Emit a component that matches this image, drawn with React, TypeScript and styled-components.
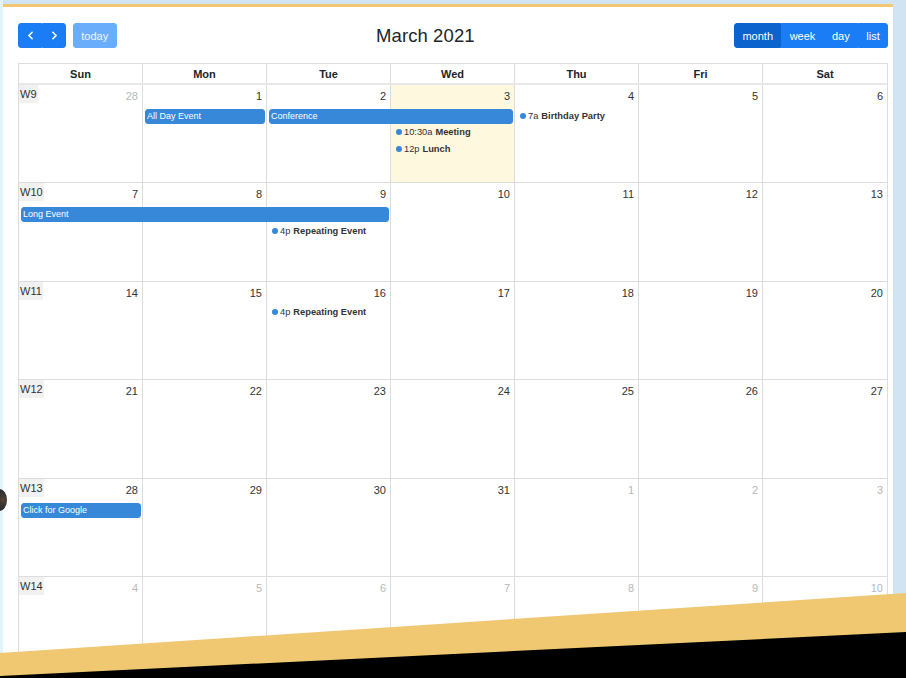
import React from "react";
import styled, { createGlobalStyle } from "styled-components";
import { ChevronLeft, ChevronRight } from "lucide-react";

const GlobalStyle = createGlobalStyle`
  html, body { margin: 0; padding: 0; }
  body {
    font-family: "Liberation Sans", Arial, Helvetica, sans-serif;
    width: 906px;
    height: 678px;
    overflow: hidden;
  }
  * { box-sizing: border-box; }
`;

const Frame = styled.div`
  position: relative;
  width: 906px;
  height: 678px;
  overflow: hidden;
  padding: 4px 13px 0 3px;
  background: linear-gradient(90deg, #e2f4fc 0, #e2f4fc 3px, #d0e4f3 3px);
  display: flex;
  flex-direction: column;
`;

const Panel = styled.div`
  flex: 1;
  min-height: 0;
  background: #fff;
  border-top: 3px solid #f2c772;
  padding: 16px 5px 0 15px;
  display: flex;
  flex-direction: column;
`;

const Toolbar = styled.div`
  display: flex;
  justify-content: space-between;
  align-items: center;
  height: 25px;
  margin-bottom: 15px;
`;

const Section = styled.div`
  display: flex;
  align-items: center;
  gap: 7px;
`;

const Group = styled.div`
  display: flex;
  & > button { border-radius: 0; }
  & > button:first-child { border-radius: 3px 0 0 3px; }
  & > button:last-child { border-radius: 0 3px 3px 0; }
`;

const Btn = styled.button<{ $active?: boolean; $faded?: boolean; $w?: number }>`
  height: 25px;
  padding: 0 7.3px;
  ${(p) => (p.$w ? `width: ${p.$w}px; padding: 0;` : "")}
  display: flex;
  align-items: center;
  justify-content: center;
  border: 1px solid ${(p) => (p.$active ? "#0b63cd" : p.$faded ? "#6aaefb" : "#1a7df6")};
  background: ${(p) => (p.$active ? "#0b63cd" : p.$faded ? "#6aaefb" : "#1a7df6")};
  color: ${(p) => (p.$faded ? "#eef6ff" : "#fff")};
  font-family: "Liberation Sans", Arial, sans-serif;
  font-size: 11px;
  border-radius: 3px;
  cursor: pointer;
`;

const Title = styled.h2`
  margin: 0;
  font-size: 18.5px;
  font-weight: 400;
  color: #212529;
  letter-spacing: 0.1px;
`;

const Calendar = styled.div`
  flex: 1;
  border: 1px solid #dddddd;
  border-bottom: none;
  display: flex;
  flex-direction: column;
`;

const HeaderRow = styled.div`
  display: grid;
  grid-template-columns: repeat(7, 1fr);
  height: 21px;
  border-bottom: 2px solid #e8e8e8;
`;

const HeaderCell = styled.div`
  display: flex;
  align-items: center;
  justify-content: center;
  font-size: 11px;
  font-weight: 700;
  color: #212529;
  border-right: 1px solid #dddddd;
  &:last-child { border-right: none; }
`;

const WeekRow = styled.div`
  display: grid;
  grid-template-columns: repeat(7, 1fr);
  grid-template-rows: 22px 17px 16.5px 16.5px 1fr;
  height: 98.4px;
  flex-shrink: 0;
`;

const DayCell = styled.div<{ $col: number; $today?: boolean }>`
  grid-column: ${(p) => p.$col};
  grid-row: 1 / -1;
  background: ${(p) => (p.$today ? "#fdf8de" : "#fff")};
  border-right: 1px solid #dddddd;
  border-bottom: 1px solid #dddddd;
  &:nth-child(7) { border-right: none; }
  display: flex;
  justify-content: space-between;
  align-items: flex-start;
`;

const WeekNum = styled.span`
  background: rgba(208, 208, 208, 0.3);
  color: #333;
  font-size: 11px;
  line-height: 14px;
  padding: 2px 1px 2px 1px;
`;

const DayNum = styled.span<{ $other?: boolean }>`
  margin-left: auto;
  padding: 4px 4px 0 0;
  font-size: 11px;
  line-height: 14px;
  color: ${(p) => (p.$other ? "#b8b8b8" : "#333")};
`;

const BlockEvent = styled.div<{ $col: number; $span: number; $row: number }>`
  grid-column: ${(p) => p.$col} / span ${(p) => p.$span};
  grid-row: ${(p) => p.$row};
  position: relative;
  margin: 2px 2px 0 2px;
  height: 15px;
  border: 1px solid #3788d8;
  border-radius: 3px;
  background: #3788d8;
  color: #fff;
  font-size: 9px;
  line-height: 13px;
  padding: 0 1px;
  white-space: nowrap;
  overflow: hidden;
`;

const DotEvent = styled.div<{ $col: number; $row: number }>`
  grid-column: ${(p) => p.$col};
  grid-row: ${(p) => p.$row};
  position: relative;
  display: flex;
  align-items: center;
  margin: 0 2px;
  padding-left: 3px;
  font-size: 9.3px;
  color: #333;
  white-space: nowrap;
  overflow: hidden;
`;

const Dot = styled.span`
  width: 6px;
  height: 6px;
  border-radius: 50%;
  background: #3788d8;
  margin-right: 2px;
  flex-shrink: 0;
`;

const EvTitle = styled.b`
  font-weight: 700;
  margin-left: 3px;
`;

const Bubble = styled.div`
  position: absolute;
  left: -8px;
  top: 489px;
  width: 15px;
  height: 22px;
  border-radius: 50%;
  background: radial-gradient(circle at 75% 50%, #5a4632 0, #3a3632 30%, #2b2b2b 70%);
`;

const Decoration = styled.svg`
  position: absolute;
  left: 0;
  bottom: 0;
  width: 906px;
  height: 90px;
  z-index: 5;
  pointer-events: none;
`;

const days = ["Sun", "Mon", "Tue", "Wed", "Thu", "Fri", "Sat"];

type Day = { n: number; other?: boolean; today?: boolean };
type Ev =
  | { kind: "block"; col: number; span: number; row: number; title: string }
  | { kind: "dot"; col: number; row: number; time: string; title: string };

const weeks: { w: string; days: Day[]; events: Ev[] }[] = [
  {
    w: "W9",
    days: [
      { n: 28, other: true },
      { n: 1 },
      { n: 2 },
      { n: 3, today: true },
      { n: 4 },
      { n: 5 },
      { n: 6 },
    ],
    events: [
      { kind: "block", col: 2, span: 1, row: 2, title: "All Day Event" },
      { kind: "block", col: 3, span: 2, row: 2, title: "Conference" },
      { kind: "dot", col: 5, row: 2, time: "7a", title: "Birthday Party" },
      { kind: "dot", col: 4, row: 3, time: "10:30a", title: "Meeting" },
      { kind: "dot", col: 4, row: 4, time: "12p", title: "Lunch" },
    ],
  },
  {
    w: "W10",
    days: [7, 8, 9, 10, 11, 12, 13].map((n) => ({ n })),
    events: [
      { kind: "block", col: 1, span: 3, row: 2, title: "Long Event" },
      { kind: "dot", col: 3, row: 3, time: "4p", title: "Repeating Event" },
    ],
  },
  {
    w: "W11",
    days: [14, 15, 16, 17, 18, 19, 20].map((n) => ({ n })),
    events: [{ kind: "dot", col: 3, row: 2, time: "4p", title: "Repeating Event" }],
  },
  {
    w: "W12",
    days: [21, 22, 23, 24, 25, 26, 27].map((n) => ({ n })),
    events: [],
  },
  {
    w: "W13",
    days: [
      { n: 28 },
      { n: 29 },
      { n: 30 },
      { n: 31 },
      { n: 1, other: true },
      { n: 2, other: true },
      { n: 3, other: true },
    ],
    events: [{ kind: "block", col: 1, span: 1, row: 2, title: "Click for Google" }],
  },
  {
    w: "W14",
    days: [4, 5, 6, 7, 8, 9, 10].map((n) => ({ n, other: true })),
    events: [],
  },
];

export default function App() {
  return (
    <>
      <GlobalStyle />
      <Frame>
        <Panel>
          <Toolbar>
            <Section>
              <Group>
                <Btn $w={24} aria-label="prev">
                  <ChevronLeft size={13} strokeWidth={3} />
                </Btn>
                <Btn $w={24} aria-label="next">
                  <ChevronRight size={13} strokeWidth={3} />
                </Btn>
              </Group>
              <Btn $faded>today</Btn>
            </Section>
            <Title>March 2021</Title>
            <Section>
              <Group>
                <Btn $active>month</Btn>
                <Btn>week</Btn>
                <Btn>day</Btn>
                <Btn>list</Btn>
              </Group>
            </Section>
          </Toolbar>
          <Calendar>
            <HeaderRow>
              {days.map((d) => (
                <HeaderCell key={d}>{d}</HeaderCell>
              ))}
            </HeaderRow>
            {weeks.map((wk) => (
              <WeekRow key={wk.w}>
                {wk.days.map((d, i) => (
                  <DayCell key={i} $col={i + 1} $today={d.today}>
                    {i === 0 && <WeekNum>{wk.w}</WeekNum>}
                    <DayNum $other={d.other}>{d.n}</DayNum>
                  </DayCell>
                ))}
                {wk.events.map((e, i) =>
                  e.kind === "block" ? (
                    <BlockEvent key={i} $col={e.col} $span={e.span} $row={e.row}>
                      {e.title}
                    </BlockEvent>
                  ) : (
                    <DotEvent key={i} $col={e.col} $row={e.row}>
                      <Dot />
                      {e.time}
                      <EvTitle>{e.title}</EvTitle>
                    </DotEvent>
                  )
                )}
              </WeekRow>
            ))}
          </Calendar>
        </Panel>
        <Bubble />
        <Decoration viewBox="0 0 906 90" preserveAspectRatio="none">
          <polygon points="0,65 906,5 906,90 0,90" fill="#f0c872" />
          <polygon points="0,88 906,44 906,90 0,90" fill="#000" />
        </Decoration>
      </Frame>
    </>
  );
}
